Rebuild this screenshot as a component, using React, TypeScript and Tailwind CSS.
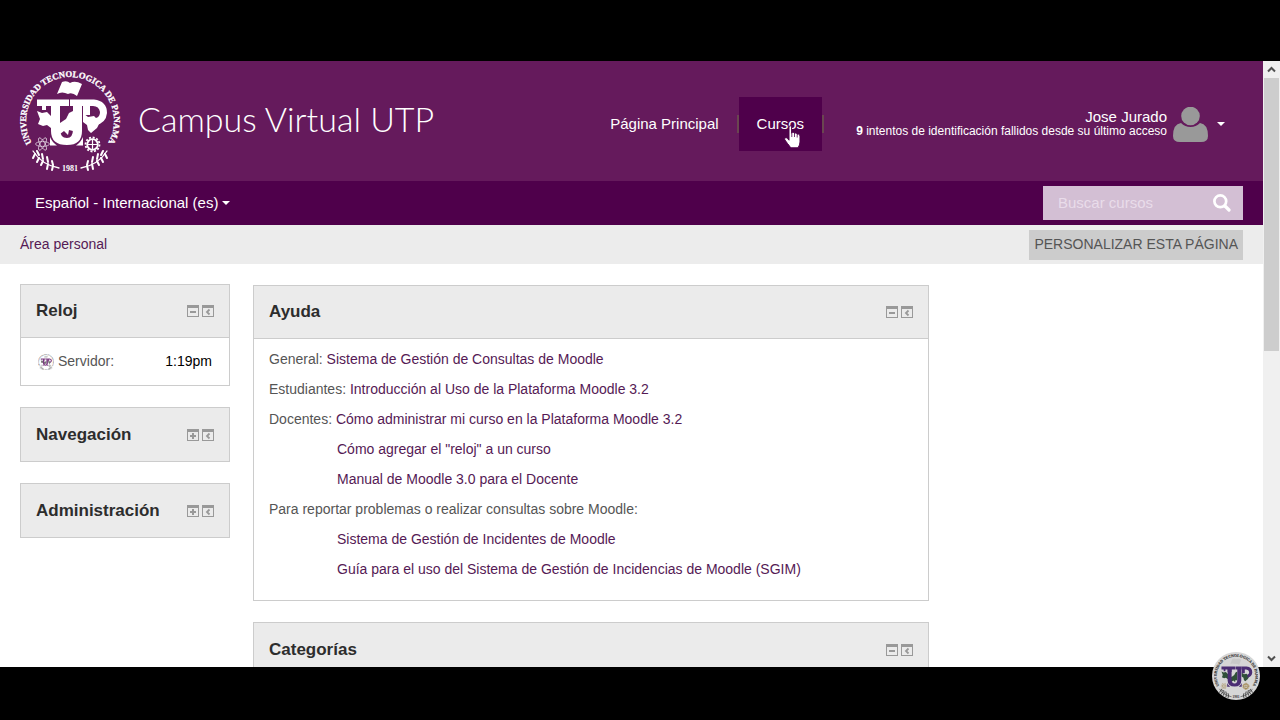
import { FormEvent, ReactNode, useState } from "react";

interface SealProps {
  className: string;
  ring: string;
  letters: string;
  leaf: string;
  gear: string;
  id: string;
}

function Seal({ className, ring, letters, leaf, gear, id }: SealProps) {
  return (
    <svg viewBox="0 0 100 100" className={className} aria-hidden="true">
      <defs>
        <path id={id} d="M11.9 72A44 44 0 1 1 88.1 72" />
      </defs>
      <text
        fill={ring}
        stroke={ring}
        strokeWidth="0.3"
        fontSize="8.7"
        fontWeight="700"
        fontFamily="'Liberation Serif', serif"
      >
        <textPath href={`#${id}`}>UNIVERSIDAD TECNOLOGICA DE PANAMA</textPath>
      </text>
      {/* laurel and founding year */}
      <g fill="none" stroke={ring} strokeWidth="1.3" strokeLinecap="round">
        <path d="M13 80Q22 94 39 97" />
        <path d="M87 80Q78 94 61 97" />
        <path
          strokeWidth="2"
          d="M15 83L13 87M19 87L17 91M23 90L21 94M28 93L27 98M17 80L19 84M22 83L23 88M27 86L28 91M32 90L33 94M33 95L32 99"
        />
        <path
          strokeWidth="2"
          d="M85 83L87 87M81 87L83 91M77 90L79 94M72 93L73 98M83 80L81 84M78 83L77 88M73 86L72 91M68 90L67 94M67 95L68 99"
        />
      </g>
      <text
        x="50"
        y="100"
        fill={ring}
        textAnchor="middle"
        fontSize="8"
        fontWeight="700"
        fontFamily="'Liberation Serif', serif"
      >
        1981
      </text>
      {/* open book */}
      <path
        fill={letters === "#fff" ? letters : "#c9c9c9"}
        d="M42 11Q47 9 50 12Q55 9 62 13L57 25Q52 21 48 23Q42 20 37 23Z"
      />
      {/* isthmus */}
      <path
        fill={leaf}
        d="M17 40L22 42L27 41L32 46L40 52L46 48L49 42L53 40V60L49 59L48 64L44 60L40 63L31 57L27 54L23 55L18 53L20 48Z"
      />
      <path fill={leaf} d="M63 42L68 46L74 45L80 51L77 57L71 62L68 59L67 54L63 51Z" />
      {/* T, U and P */}
      <g fill={letters}>
        <path d="M17 28.5H49V35H40V41H31V35H26V39H22V35H17Z" />
        <path d="M31 34H40V58Q40 67 47 67Q53 67 53 58V35H50V28.5H62V60Q62 74 47 74Q31 74 31 60Z" />
        <path
          fillRule="evenodd"
          d="M62 28.5H74Q87 30 87 42Q86 52 76 54V47Q80 46 80 41Q79 35 73 35H70V44H63V35H62Z"
        />
        <path d="M30 66Q32 71 37 74.500H30ZM63 66Q61 71 56 74.500H63Z" />
      </g>
      <g fill="none" stroke={gear}>
        <circle cx="72.500" cy="73.500" r="5.3" strokeWidth="1.8" />
        <circle cx="72.500" cy="73.500" r="7" strokeWidth="1.8" strokeDasharray="2 1.66" />
        <path strokeWidth="1.2" d="M67 73.500H78M72.500 68V79" />
        <g strokeWidth="0.6">
          <ellipse cx="22.500" cy="73" rx="7" ry="2.4" />
          <ellipse cx="22.500" cy="73" rx="7" ry="2.4" transform="rotate(60 22.5 73)" />
          <ellipse cx="22.500" cy="73" rx="7" ry="2.4" transform="rotate(120 22.5 73)" />
        </g>
      </g>
    </svg>
  );
}

function Caret() {
  return (
    <svg viewBox="0 0 8 4" className="h-1 w-2 fill-current" aria-hidden="true">
      <path d="M0 0H8L4 4Z" />
    </svg>
  );
}

function HideIcon({ open }: { open: boolean }) {
  return (
    <svg viewBox="0 0 12 12" className="size-3" aria-hidden="true">
      <path fill="#999" fillRule="evenodd" d="M0 0H12V12H0ZM1 3V11H11V3Z" />
      <path fill="#999" d={open ? "M3 6H9V8H3Z" : "M3 6H5V4H7V6H9V8H7V10H5V8H3Z"} />
    </svg>
  );
}

function DockIcon() {
  return (
    <svg viewBox="0 0 12 12" className="size-3" aria-hidden="true">
      <path fill="#999" fillRule="evenodd" d="M0 0H12V12H0ZM1 3V11H11V3Z" />
      <path fill="none" stroke="#999" strokeWidth="1.8" d="M7.5 4.5L5 7L7.5 9.5" />
    </svg>
  );
}

interface BlockProps {
  title: string;
  initiallyOpen?: boolean;
  children?: ReactNode;
}

function Block({ title, initiallyOpen = false, children }: BlockProps) {
  const [open, setOpen] = useState(initiallyOpen);

  return (
    <section className="border border-[#ccc] bg-white">
      <header
        className={`flex h-[53px] items-center justify-between border-[#ccc] bg-[#ebebeb] px-[15px] ${
          open && children ? "border-b" : ""
        }`}
      >
        <h2 className="text-[17px] leading-6 font-bold text-[#2d2d2d]">{title}</h2>
        <div className="flex gap-[3px]">
          <button
            type="button"
            aria-label={open ? "Ocultar bloque" : "Mostrar bloque"}
            onClick={() => setOpen(!open)}
          >
            <HideIcon open={open} />
          </button>
          <button type="button" aria-label="Minimizar bloque">
            <DockIcon />
          </button>
        </div>
      </header>
      {open && children}
    </section>
  );
}

interface HelpLink {
  label?: string;
  text: string;
  indent?: boolean;
}

const HELP_LINKS: HelpLink[] = [
  { label: "General:", text: "Sistema de Gestión de Consultas de Moodle" },
  { label: "Estudiantes:", text: "Introducción al Uso de la Plataforma Moodle 3.2" },
  { label: "Docentes:", text: "Cómo administrar mi curso en la Plataforma Moodle 3.2" },
  { text: 'Cómo agregar el "reloj" a un curso', indent: true },
  { text: "Manual de Moodle 3.0 para el Docente", indent: true },
];

const REPORT_LINKS: HelpLink[] = [
  { text: "Sistema de Gestión de Incidentes de Moodle", indent: true },
  {
    text: "Guía para el uso del Sistema de Gestión de Incidencias de Moodle (SGIM)",
    indent: true,
  },
];

function HelpRow({ label, text, indent }: HelpLink) {
  return (
    <p className={indent ? "pl-[68px]" : ""}>
      {label && `${label} `}
      <a href="#" className="text-[#551a55] hover:underline">
        {text}
      </a>
    </p>
  );
}

function Header() {
  return (
    <header className="flex h-[120px] shrink-0 items-center bg-[#651a5c] pr-[38px] pl-5 text-white">
      <Seal
        className="size-[100px] shrink-0 overflow-visible"
        ring="#fff"
        letters="#fff"
        leaf="#fff"
        gear="#fff"
        id="seal-header"
      />
      <h1 className="mb-1 ml-[18px] font-['Lato',sans-serif] text-[34px] leading-10 font-light whitespace-nowrap">
        Campus Virtual UTP
      </h1>
      <nav className="mt-[6px] ml-auto flex items-center text-[15px] whitespace-nowrap">
        <a href="#" className="px-[18px] leading-[54px]">
          Página Principal
        </a>
        <span className="h-[18px] w-[2px] bg-[#6a4650]" />
        <a href="#" className="relative bg-[#4f004b] px-[18px] leading-[54px]">
          Cursos
          <svg
            viewBox="0 0 18 24"
            className="absolute top-7 left-[45px] h-6 w-[18px]"
            aria-hidden="true"
          >
            <path
              fill="#fff"
              stroke="#4f004b"
              strokeWidth="1"
              strokeLinejoin="round"
              d="M5 2Q5 .8 6.3 .8T7.6 2V8.2Q8 7 9.2 7.2T10.5 8.5Q11 7.7 12 8T13.2 9.4Q13.8 8.7 14.8 9.2T16 11V17Q16 20 14 22.8H6.7Q5.5 20.8 3.5 18.5L.8 14.8Q.2 13.4 1.4 12.9T3.6 13.6L5 15.2Z"
            />
            <path stroke="#4f004b" strokeWidth=".8" d="M7.8 8V12M10.5 8.5V12M13.2 9.5V12.5" />
          </svg>
        </a>
        <span className="h-[18px] w-[2px] bg-[#6a4650]" />
      </nav>
      <button
        type="button"
        className="mt-[6px] ml-8 flex items-center text-right whitespace-nowrap"
      >
        <span className="flex flex-col">
          <span className="text-[15px] leading-[15px]">Jose Jurado</span>
          <span className="text-[12px] leading-[15px]">
            <b>9</b> intentos de identificación fallidos desde su último acceso
          </span>
        </span>
        <svg viewBox="0 0 35 35" className="ml-[6px] size-[35px] fill-[#999]" aria-hidden="true">
          <circle cx="17.5" cy="9" r="9.3" />
          <path d="M8 16Q12 20 17.5 20T27 16Q35 17 35 29Q35 35 28 35H7Q0 35 0 29Q0 17 8 16Z" />
        </svg>
        <span className="ml-[9px]">
          <Caret />
        </span>
      </button>
    </header>
  );
}

function Toolbar() {
  const [query, setQuery] = useState("");

  function handleSubmit(e: FormEvent) {
    e.preventDefault();
  }

  return (
    <div className="flex h-11 shrink-0 items-center justify-between bg-[#4f004b] pr-5 pl-[35px] text-white">
      <button type="button" className="flex items-center gap-1 text-[15px]">
        Español - Internacional (es)
        <Caret />
      </button>
      <form onSubmit={handleSubmit} className="flex h-[34px] w-[200px] items-center bg-[#d3bfd4]">
        <input
          type="text"
          aria-label="Buscar cursos"
          value={query}
          onChange={(e) => setQuery(e.target.value)}
          placeholder="Buscar cursos"
          className="min-w-0 flex-1 pl-[15px] text-[15px] text-[#4f004b] outline-none placeholder:text-[#e9dcea]"
        />
        <button type="submit" aria-label="Buscar" className="mr-3">
          <svg viewBox="0 0 18 18" className="size-[18px]" aria-hidden="true">
            <circle cx="7.3" cy="7.3" r="5.9" fill="none" stroke="#fff" strokeWidth="2.7" />
            <path stroke="#fff" strokeWidth="3.2" strokeLinecap="round" d="M12 12L16 16" />
          </svg>
        </button>
      </form>
    </div>
  );
}

function Scrollbar() {
  return (
    <div className="flex w-[17px] shrink-0 flex-col items-center bg-[#f0f0f0]" aria-hidden="true">
      <svg viewBox="0 0 17 17" className="size-[17px] shrink-0">
        <path fill="none" stroke="#505050" strokeWidth="2" d="M5 10.5L8.5 7L12 10.5" />
      </svg>
      <div className="h-[273px] w-[15px] bg-[#cdcdcd]" />
      <svg viewBox="0 0 17 17" className="mt-auto size-[17px] shrink-0">
        <path fill="none" stroke="#505050" strokeWidth="2" d="M5 6.5L8.5 10L12 6.5" />
      </svg>
    </div>
  );
}

export default function App() {
  return (
    <div className="relative flex h-screen flex-col bg-black pt-[61px] pb-[53px] font-['Liberation_Sans',sans-serif]">
      <div className="flex min-h-0 flex-1 bg-white">
        <div className="flex min-w-0 flex-1 flex-col overflow-hidden">
          <Header />
          <Toolbar />
          <div className="flex h-[39px] shrink-0 items-center justify-between bg-[#ececec] px-5">
            <a href="#" className="text-[14px] text-[#551a55]">
              Área personal
            </a>
            <button
              type="button"
              className="h-[30px] bg-[#ccc] px-[5px] text-[14px] text-[#555]"
            >
              PERSONALIZAR ESTA PÁGINA
            </button>
          </div>
          <div className="flex items-start gap-[23px] px-5 pt-5">
            <aside className="flex w-[210px] shrink-0 flex-col gap-[21px]">
              <Block title="Reloj" initiallyOpen>
                <div className="flex h-[47px] items-center justify-between px-[17px] text-[14px]">
                  <span className="flex items-center gap-1 text-[#555]">
                    <Seal
                      className="size-4"
                      ring="#777"
                      letters="#7b3b80"
                      leaf="#777"
                      gear="#777"
                      id="seal-clock"
                    />
                    Servidor:
                  </span>
                  <time className="text-black">1:19pm</time>
                </div>
              </Block>
              <Block title="Navegación" />
              <Block title="Administración" />
            </aside>
            <main className="mt-px flex max-w-[676px] flex-1 flex-col gap-[21px]">
              <Block title="Ayuda" initiallyOpen>
                <div className="px-[15px] pt-[5px] pb-4 text-[14px] leading-[30px] text-[#555]">
                  {HELP_LINKS.map((link) => (
                    <HelpRow key={link.text} {...link} />
                  ))}
                  <p>Para reportar problemas o realizar consultas sobre Moodle:</p>
                  {REPORT_LINKS.map((link) => (
                    <HelpRow key={link.text} {...link} />
                  ))}
                </div>
              </Block>
              <Block title="Categorías" initiallyOpen />
            </main>
          </div>
        </div>
        <Scrollbar />
      </div>
      <div className="absolute right-5 bottom-5 size-12 rounded-full bg-[#d6d6d6] p-[2px]">
        <Seal
          className="size-11"
          ring="#333"
          letters="#4b2d73"
          leaf="#2f5038"
          gear="#9a7b3c"
          id="seal-watermark"
        />
      </div>
    </div>
  );
}
